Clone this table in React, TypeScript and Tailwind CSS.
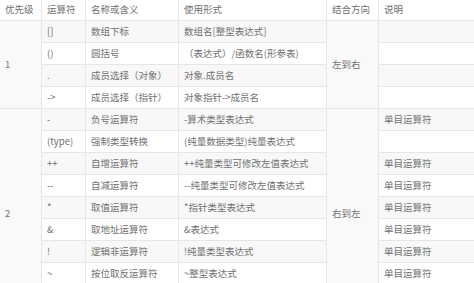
import React from "react";

type Row = { op: string; name: string; form: string; desc: string };

const g1: Row[] = [
  { op: "[]", name: "数组下标", form: "数组名[整型表达式]", desc: "" },
  { op: "()", name: "圆括号", form: "（表达式）/函数名(形参表)", desc: "" },
  { op: ".", name: "成员选择（对象）", form: "对象.成员名", desc: "" },
  { op: "->", name: "成员选择（指针）", form: "对象指针->成员名", desc: "" },
];

const g2: Row[] = [
  { op: "-", name: "负号运算符", form: "-算术类型表达式", desc: "单目运算符" },
  { op: "(type)", name: "强制类型转换", form: "(纯量数据类型)纯量表达式", desc: "" },
  { op: "++", name: "自增运算符", form: "++纯量类型可修改左值表达式", desc: "单目运算符" },
  { op: "--", name: "自减运算符", form: "--纯量类型可修改左值表达式", desc: "单目运算符" },
  { op: "*", name: "取值运算符", form: "*指针类型表达式", desc: "单目运算符" },
  { op: "&", name: "取地址运算符", form: "&表达式", desc: "单目运算符" },
  { op: "!", name: "逻辑非运算符", form: "!纯量类型表达式", desc: "单目运算符" },
  { op: "~", name: "按位取反运算符", form: "~整型表达式", desc: "单目运算符" },
];

const cell = "border border-[#e6e6e6] px-[5px] align-middle whitespace-nowrap overflow-hidden";

export default function App() {
  let idx = 0;
  return (
    <div
      className="w-[474px] h-[283px] overflow-hidden bg-white text-[#707070] text-[9.5px] leading-none"
      style={{ fontFamily: '"Noto Sans CJK SC", "Noto Sans", sans-serif' }}
    >
      <table className="w-[476px] -ml-px -mt-px border-collapse table-fixed">
        <colgroup>
          <col className="w-[42px]" />
          <col className="w-[44px]" />
          <col className="w-[93px]" />
          <col className="w-[148px]" />
          <col className="w-[52px]" />
          <col className="w-[97px]" />
        </colgroup>
        <thead>
          <tr className="h-[21px] bg-white">
            <td className={cell}>优先级</td>
            <td className={cell}>运算符</td>
            <td className={cell}>名称或含义</td>
            <td className={cell}>使用形式</td>
            <td className={cell}>结合方向</td>
            <td className={cell}>说明</td>
          </tr>
        </thead>
        <tbody>
          {g1.map((r, i) => {
            const stripe = idx++ % 2 === 0;
            return (
              <tr key={"a" + i} className={stripe ? "h-[22px] bg-[#f8f8f8]" : "h-[22px] bg-white"}>
                {i === 0 && (
                  <td rowSpan={4} className={cell + " bg-[#f9f9f9]"}>
                    1
                  </td>
                )}
                <td className={cell}>{r.op}</td>
                <td className={cell}>{r.name}</td>
                <td className={cell}>{r.form}</td>
                {i === 0 && (
                  <td rowSpan={4} className={cell + " bg-[#f9f9f9]"}>
                    左到右
                  </td>
                )}
                <td className={cell}>{r.desc}</td>
              </tr>
            );
          })}
          {g2.map((r, i) => {
            const stripe = idx++ % 2 === 0;
            return (
              <tr key={"b" + i} className={stripe ? "h-[22px] bg-[#f8f8f8]" : "h-[22px] bg-white"}>
                {i === 0 && (
                  <td rowSpan={8} className={cell + " bg-[#f9f9f9] pt-[34px]"}>
                    2
                  </td>
                )}
                <td className={cell}>{r.op}</td>
                <td className={cell}>{r.name}</td>
                <td className={cell}>{r.form}</td>
                {i === 0 && (
                  <td rowSpan={8} className={cell + " bg-[#f9f9f9] pt-[34px]"}>
                    右到左
                  </td>
                )}
                <td className={cell}>{r.desc}</td>
              </tr>
            );
          })}
        </tbody>
      </table>
    </div>
  );
}
